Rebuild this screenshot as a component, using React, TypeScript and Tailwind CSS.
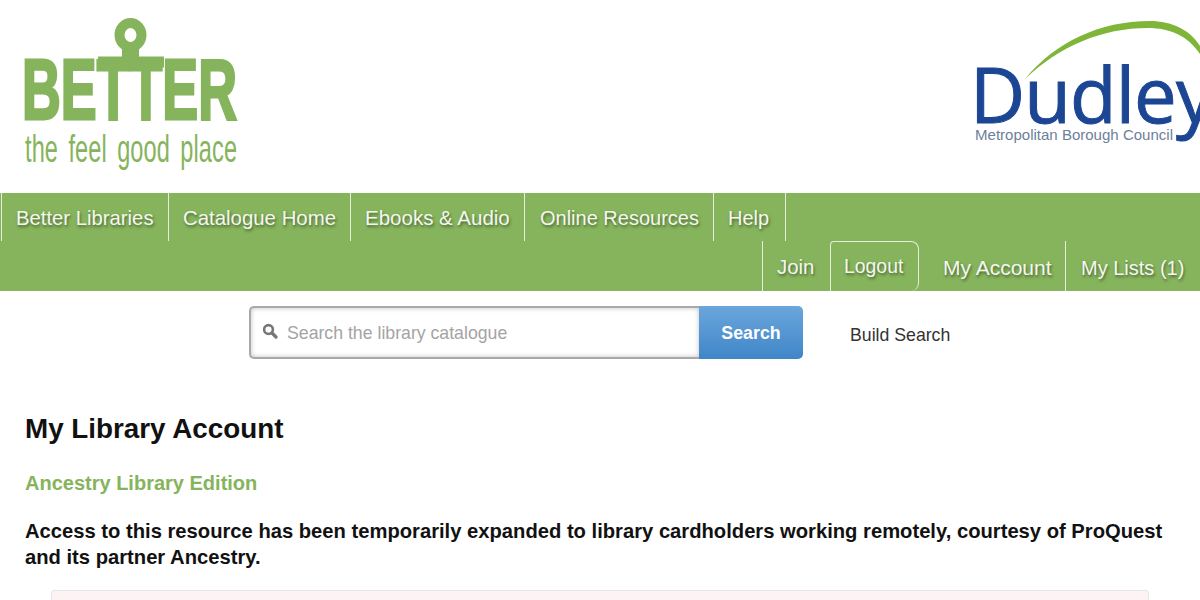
import React from 'react';

const FONT = 'font-["Liberation_Sans",Arial,sans-serif]';

function BetterLogo() {
  return (
    <svg width="240" height="180" viewBox="0 0 240 180" className="block">
      <ellipse cx="130.5" cy="35" rx="11" ry="12" fill="none" stroke="#86b45c" strokeWidth="10" />
      <rect x="122" y="46" width="17" height="12" fill="#86b45c" />
      <rect x="98" y="56.5" width="66" height="11" fill="#86b45c" />
      <text
        x="22"
        y="118.5"
        textLength="215"
        lengthAdjust="spacingAndGlyphs"
        fontFamily="'Liberation Sans', Arial, sans-serif"
        fontWeight="700"
        fontSize="86"
        fill="#86b45c"
        stroke="#86b45c"
        strokeWidth="3"
      >
        BETTER
      </text>
      <text
        transform="translate(25 162) scale(0.62 1)"
        textLength="342"
        lengthAdjust="spacing"
        fontFamily="'Liberation Sans', Arial, sans-serif"
        fontSize="38"
        wordSpacing="6"
        fill="#86b45c"
      >
        the feel good place
      </text>
    </svg>
  );
}

function DudleyLogo() {
  return (
    <svg width="250" height="160" viewBox="0 0 250 160" className="block">
      <path d="M75 79 C105 42 150 21 200 21 C222 21 240 30 250 46 L250 54 C238 36 220 28 198 28 C152 28 110 46 75 79Z" fill="#7fb539" />
      <text
        x="20"
        y="123"
        textLength="244"
        lengthAdjust="spacing"
        fontFamily="'Open Sans', 'Liberation Sans', sans-serif"
        fontSize="76"
        fill="#1c4693"
        stroke="#1c4693"
        strokeWidth="1"
      >
        Dudley
      </text>
      <text
        x="25"
        y="140"
        textLength="198"
        lengthAdjust="spacingAndGlyphs"
        fontFamily="'Liberation Sans', sans-serif"
        fontSize="14.5"
        fill="#6d7f9c"
      >
        Metropolitan Borough Council
      </text>
    </svg>
  );
}

const topLinks = [
  { label: 'Better Libraries', w: 'w-[168px]', pl: 'pl-[14px]', size: 'text-[20.3px]' },
  { label: 'Catalogue Home', w: 'w-[182px]', pl: 'pl-[14px]', size: 'text-[20.4px]' },
  { label: 'Ebooks & Audio', w: 'w-[174px]', pl: 'pl-[14px]', size: 'text-[20.5px]' },
  { label: 'Online Resources', w: 'w-[189px]', pl: 'pl-[15px]', size: 'text-[20px]' },
  { label: 'Help', w: 'w-[72px]', pl: 'pl-[14px]', size: 'text-[20px]' },
];

const navText = 'text-[#f4f7ef] [text-shadow:1px_2px_3px_rgba(0,0,0,0.45)]';

export default function App() {
  return (
    <div className={`w-[1200px] h-[600px] overflow-hidden bg-white ${FONT}`}>
      <header className="h-[193px] flex justify-between overflow-hidden">
        <BetterLogo />
        <div className="w-[250px] shrink-0 overflow-hidden">
          <DudleyLogo />
        </div>
      </header>

      <nav className="h-[98px] bg-[#86b45c] flex flex-col">
        <ul className="h-[48px] flex pl-px">
          {topLinks.map((l, i) => (
            <li
              key={l.label}
              className={`${l.w} ${l.pl} ${l.size} h-full flex items-center pt-[2px] border-r border-[#e4eeda] ${i === 0 ? 'border-l' : ''} ${navText}`}
            >
              {l.label}
            </li>
          ))}
        </ul>
        <ul className="h-[50px] flex justify-end pr-px">
          <li className={`w-[68px] flex items-center pl-[14px] pt-[3px] border-l border-[#e4eeda] text-[20.4px] ${navText}`}>Join</li>
          <li className={`w-[89px] flex items-center pl-[13px] border border-[#e4eeda] border-b-0 rounded-r-lg rounded-tl-sm text-[19.4px] ${navText}`}>Logout</li>
          <li className={`w-[147px] flex items-center pl-[24px] pt-[3px] border-r border-[#e4eeda] text-[21px] ${navText}`}>My Account</li>
          <li className={`w-[133px] flex items-center pl-[15px] pt-[3px] text-[20px] ${navText}`}>My Lists (1)</li>
        </ul>
      </nav>

      <div className="mt-[15px] ml-[249px] flex items-center">
        <div className="w-[450px] h-[53px] flex items-center gap-[9px] pl-[11px] rounded-l-[5px] border-2 border-r-0 border-[#a9a9a9] shadow-[inset_0_0_5px_rgba(0,0,0,0.25)]">
          <svg width="16" height="16" viewBox="0 0 16 16" className="mb-[3px] shrink-0">
            <circle cx="6.5" cy="6.5" r="4.4" fill="none" stroke="#777" strokeWidth="2.6" />
            <path d="M10 10 L14 14" stroke="#777" strokeWidth="3.2" strokeLinecap="round" />
          </svg>
          <span className="text-[17.7px] text-[#a4a4a4] pt-[1px]">Search the library catalogue</span>
        </div>
        <button className="w-[104px] h-[53px] rounded-r-[5px] bg-gradient-to-b from-[#6ba6dc] to-[#3f86c8] text-white font-bold text-[17.8px] pt-[1px]">
          Search
        </button>
        <span className="ml-[47px] text-[17.7px] text-[#333] pt-[5px]">Build Search</span>
      </div>

      <main className="px-[25px]">
        <h1 className="mt-[52px] text-[27.8px] leading-[36px] font-bold text-[#111]">My Library Account</h1>
        <h2 className="mt-[23px] text-[20px] leading-[26px] font-bold text-[#86b45c]">Ancestry Library Edition</h2>
        <p className="mt-[22px] text-[20.2px] leading-[26px] font-bold text-[#111]">
          Access to this resource has been temporarily expanded to library cardholders working remotely, courtesy of ProQuest and its partner Ancestry.
        </p>
        <div className="mt-[20px] ml-[26px] w-[1098px] h-[60px] bg-[#fdf3f4] border border-[#e8e4ec] rounded-[3px]" />
      </main>
    </div>
  );
}
